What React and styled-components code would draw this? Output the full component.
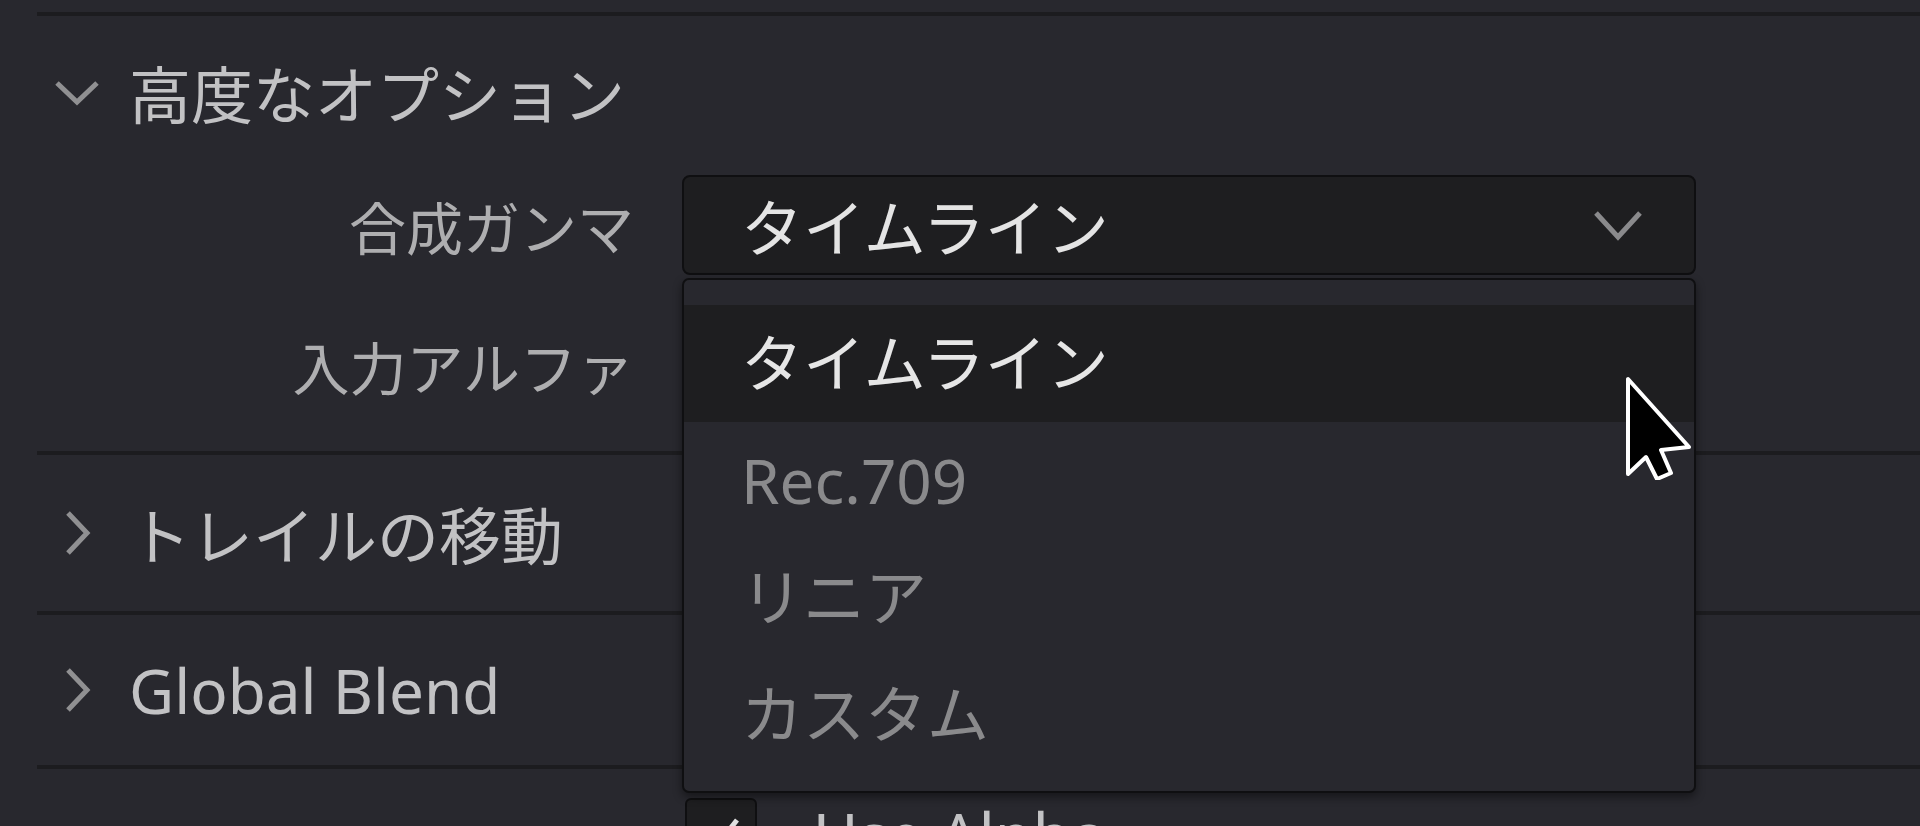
import React from 'react';
import styled, { createGlobalStyle } from 'styled-components';

const GlobalStyle = createGlobalStyle`
  html, body {
    margin: 0;
    padding: 0;
    background-color: #28282e;
    overflow: hidden;
  }
  body {
    font-family: 'Noto Sans', 'Noto Sans CJK JP', sans-serif;
  }
`;

const Panel = styled.div`
  width: 1920px;
  height: 826px;
  padding-top: 12px;
  box-sizing: border-box;
  background-color: #28282e;
  overflow: hidden;
  position: relative;
`;

const Section = styled.section`
  margin-left: 37px;
  border-top: 4px solid #1c1c1f;
`;

const SectionHeader = styled.div`
  display: flex;
  align-items: center;
  height: ${(p) => p.$height || 152}px;
  padding-left: 18px;
  gap: 30px;
  color: #c2c2c4;
  font-size: 62px;
  white-space: nowrap;
`;

const Chevron = styled.svg`
  width: 44px;
  height: 44px;
  flex: none;
  transform: rotate(${(p) => (p.$open ? 0 : -90)}deg);
`;

const Rows = styled.div`
  display: flex;
  flex-direction: column;
  gap: 40px;
  padding: 7px 0 36px;
`;

const Row = styled.div`
  display: grid;
  grid-template-columns: 597px 1014px;
  column-gap: 48px;
  align-items: center;
  height: 100px;
`;

const Label = styled.div`
  text-align: right;
  color: #aeaeb0;
  font-size: 57px;
  white-space: nowrap;
`;

const SelectWrap = styled.div`
  position: relative;
  height: 100%;
`;

const SelectBox = styled.div`
  display: flex;
  align-items: center;
  justify-content: space-between;
  height: 100%;
  box-sizing: border-box;
  padding: 0 51px 0 57px;
  background-color: #1e1e20;
  border: 2px solid #0f0f11;
  border-radius: 8px;
  color: #e4e4e4;
  font-size: 62px;
  white-space: nowrap;
`;

const SelectChevron = styled.svg`
  width: 50px;
  height: 36px;
  flex: none;
`;

const Menu = styled.div`
  position: absolute;
  top: calc(100% + 3px);
  left: 0;
  width: 100%;
  box-sizing: border-box;
  padding: 25px 0 18px;
  background-color: #28282e;
  border: 2px solid #0f0f11;
  border-radius: 7px;
  box-shadow: 0 4px 10px rgba(0, 0, 0, 0.45);
  z-index: 10;
`;

const MenuItem = styled.div`
  height: 117px;
  line-height: 117px;
  padding-left: 57px;
  font-size: 62px;
  white-space: nowrap;
  background-color: ${(p) => (p.$active ? '#1e1e20' : 'transparent')};
  color: ${(p) => (p.$active ? '#e6e6e6' : '#8a8a8c')};
`;

const CheckRow = styled.div`
  display: grid;
  grid-template-columns: 597px auto;
  column-gap: 48px;
  padding-top: 23px;
`;

const CheckField = styled.div`
  display: flex;
  align-items: center;
  gap: 56px;
  grid-column: 2;
  color: #c2c2c4;
  font-size: 62px;
  white-space: nowrap;
`;

const CheckBox = styled.div`
  width: 72px;
  height: 72px;
  margin-left: 3px;
  box-sizing: border-box;
  background-color: #1e1e20;
  border: 2px solid #0f0f11;
  border-radius: 6px;
  display: flex;
  align-items: center;
  justify-content: center;
`;

const Cursor = styled.svg`
  position: absolute;
  left: 1625px;
  top: 376px;
  width: 66px;
  height: 104px;
  z-index: 20;
`;

const ChevronIcon = ({ open }) => (
  <Chevron viewBox="0 0 44 44" $open={open}>
    <polyline points="2,13 22,32 42,13" fill="none" stroke="#909092" strokeWidth="5" />
  </Chevron>
);

const options = ['タイムライン', 'Rec.709', 'リニア', 'カスタム'];

const App = () => {
  return (
    <>
      <GlobalStyle />
      <Panel>
        <Section>
          <SectionHeader $height={152}>
            <ChevronIcon open />
            高度なオプション
          </SectionHeader>
          <Rows>
            <Row>
              <Label>合成ガンマ</Label>
              <SelectWrap>
                <SelectBox>
                  タイムライン
                  <SelectChevron viewBox="0 0 50 36">
                    <polyline points="3,6 25,30 47,6" fill="none" stroke="#8a8a8c" strokeWidth="5" />
                  </SelectChevron>
                </SelectBox>
                <Menu>
                  {options.map((opt, i) => (
                    <MenuItem key={opt} $active={i === 0}>{opt}</MenuItem>
                  ))}
                </Menu>
              </SelectWrap>
            </Row>
            <Row>
              <Label>入力アルファ</Label>
              <SelectWrap>
                <SelectBox>
                  ストレート
                  <SelectChevron viewBox="0 0 50 36">
                    <polyline points="3,6 25,30 47,6" fill="none" stroke="#8a8a8c" strokeWidth="5" />
                  </SelectChevron>
                </SelectBox>
              </SelectWrap>
            </Row>
          </Rows>
        </Section>
        <Section>
          <SectionHeader $height={156}>
            <ChevronIcon />
            トレイルの移動
          </SectionHeader>
        </Section>
        <Section>
          <SectionHeader $height={150}>
            <ChevronIcon />
            Global Blend
          </SectionHeader>
        </Section>
        <Section>
          <CheckRow>
            <CheckField>
              <CheckBox>
                <svg width="44" height="44" viewBox="0 0 44 44">
                  <polyline points="6,24 16,36 38,8" fill="none" stroke="#e0e0e0" strokeWidth="5" />
                </svg>
              </CheckBox>
              Use Alpha
            </CheckField>
          </CheckRow>
        </Section>
        <Cursor viewBox="-3 -3 66 104">
          <path
            d="M0 0 L0 95 L18 78 L29 100 L43 94 L33 71 L61 68 Z"
            fill="#000"
            stroke="#fff"
            strokeWidth="4"
            strokeLinejoin="round"
          />
        </Cursor>
      </Panel>
    </>
  );
};

export default App;
